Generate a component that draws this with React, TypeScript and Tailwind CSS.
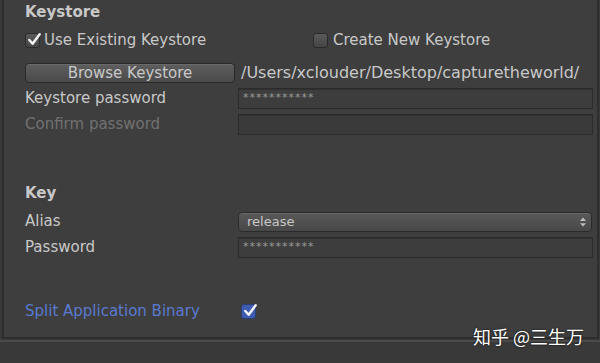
import React from 'react';

const font = { fontFamily: '"DejaVu Sans", "Liberation Sans", sans-serif' };

const Check = ({ checked, blue }: { checked: boolean; blue?: boolean }) => (
  <div
    className={`relative w-[15px] h-[15px] rounded-[3px] border ${
      blue
        ? 'bg-[#3f5cb0] border-[#2d3f7a]'
        : 'bg-gradient-to-b from-[#5a5a5a] to-[#454545] border-[#2a2a2a]'
    }`}
  >
    {checked && (
      <svg viewBox="0 0 16 16" className="absolute -top-[2px] left-[1px] w-[15px] h-[15px]">
        <path d="M2.5 8.5 L6 12.5 L13.5 2.5" fill="none" stroke="#f4f4f4" strokeWidth="2.6" strokeLinecap="round" strokeLinejoin="round" />
      </svg>
    )}
  </div>
);

const Field = ({ value, disabled }: { value?: string; disabled?: boolean }) => (
  <div
    className={`w-[355px] h-[21px] border border-[#2b2b2b] shadow-[inset_0_1px_0_#303030] flex items-center px-1 text-[11px] tracking-[1px] text-[#9a9a9a] ${
      disabled ? 'bg-[#3a3a3a]' : 'bg-[#3d3d3d]'
    }`}
  >
    {value}
  </div>
);

export default function App() {
  return (
    <div className="w-[600px] h-[363px] bg-[#393939] overflow-hidden" style={font}>
      <div className="h-[339px] bg-[#3e3e3e] border-l-2 border-r-2 border-b-2 border-[#2e2e2e] ml-[2px] mr-[1px] pl-[21px] text-[15px] text-[#c8c8c8] flex flex-col">
        <div className="font-bold mt-[1px] leading-[22px]">Keystore</div>

        <div className="flex items-center h-[20px] mt-[7px]">
          <div className="w-[288px] flex items-center gap-[4px]">
            <Check checked />
            <span>Use Existing Keystore</span>
          </div>
          <div className="flex items-center gap-[5px]">
            <Check checked={false} />
            <span>Create New Keystore</span>
          </div>
        </div>

        <div className="flex items-center h-[20px] mt-[13px]">
          <div className="w-[210px] h-[20px] rounded-[4px] border border-[#2a2a2a] bg-gradient-to-b from-[#5e5e5e] to-[#4a4a4a] shadow-[inset_0_1px_0_#6a6a6a] flex items-center justify-center text-[15px] text-[#c8c8c8]">
            Browse Keystore
          </div>
          <div className="ml-[6px] whitespace-nowrap text-[16px]">
            /Users/xclouder/Desktop/capturetheworld/
          </div>
        </div>

        <div className="flex items-center h-[21px] mt-[5px]">
          <div className="w-[213px]">Keystore password</div>
          <Field value="***********" />
        </div>

        <div className="flex items-center h-[21px] mt-[5px]">
          <div className="w-[213px] text-[#717171]">Confirm password</div>
          <Field disabled />
        </div>

        <div className="font-bold mt-[47px] leading-[22px]">Key</div>

        <div className="flex items-center h-[21px] mt-[7px]">
          <div className="w-[213px]">Alias</div>
          <div className="w-[354px] h-[20px] rounded-[4px] border border-[#2a2a2a] bg-gradient-to-b from-[#595959] to-[#484848] shadow-[inset_0_1px_0_#686868] flex items-center justify-between pl-[8px] pr-[5px] text-[13px] text-[#c8c8c8]">
            <span>release</span>
            <svg viewBox="0 0 8 12" className="w-[6px] h-[10px]">
              <path d="M4 0 L8 4.5 L0 4.5 Z M4 12 L8 7.5 L0 7.5 Z" fill="#bdbdbd" />
            </svg>
          </div>
        </div>

        <div className="flex items-center h-[21px] mt-[5px]">
          <div className="w-[213px]">Password</div>
          <Field value="***********" />
        </div>

        <div className="flex items-center h-[20px] mt-[43px]">
          <div className="w-[216px] text-[#5a7ad0]">Split Application Binary</div>
          <Check checked blue />
        </div>
      </div>
      <div className="h-[2px] bg-[#4a4a4a] mt-[1px]" />
      <div
        className="flex justify-end pr-[16px] -mt-[19px] text-[18px] text-white [text-shadow:0_0_2px_#000]"
        style={{ fontFamily: '"Noto Sans CJK SC", sans-serif' }}
      >
        知乎 @三生万
      </div>
    </div>
  );
}
